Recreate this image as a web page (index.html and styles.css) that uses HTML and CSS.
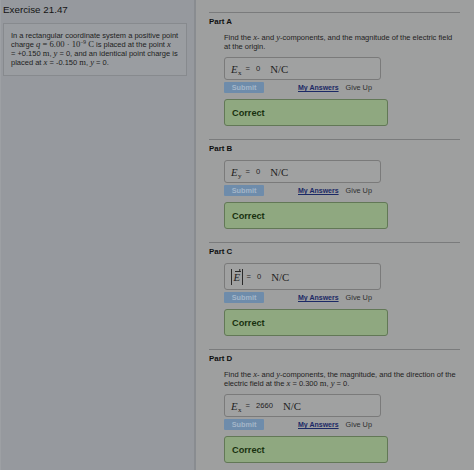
FILE: index.html
```html
<!DOCTYPE html>
<html>
<head>
<meta charset="utf-8">
<title>Exercise 21.47</title>
<link rel="stylesheet" href="styles.css">
</head>
<body>
<div class="page">
  <aside class="left">
    <h1 class="title">Exercise 21.47</h1>
    <div class="info">
      In a rectangular coordinate system a positive point<br>
      charge <span class="m"><i>q</i> = 6.00 · 10<sup>−9</sup> C</span> is placed at the point <span class="m"><i>x</i></span><br>
      = +0.150 <span class="m">m</span>, <span class="m"><i>y</i></span> = 0, and an identical point charge is<br>
      placed at <span class="m"><i>x</i></span> = -0.150 <span class="m">m</span>, <span class="m"><i>y</i></span> = 0.
    </div>
  </aside>
  <main class="right">
    <section class="part">
      <h2 class="label">Part A</h2>
      <div class="body">
        <p class="q">Find the <span class="m"><i>x</i></span>- and <span class="m"><i>y</i></span>-components, and the magnitude of the electric field<br>at the origin.</p>
        <div class="input"><span class="var"><i>E</i><sub>x</sub></span><span class="eq">=</span><span class="val">0</span><span class="unit">N/C</span></div>
        <div class="actions"><span class="submit">Submit</span><a class="mine">My Answers</a><span class="give">Give Up</span></div>
        <div class="correct">Correct</div>
      </div>
    </section>
    <section class="part">
      <h2 class="label">Part B</h2>
      <div class="body">
        <div class="input"><span class="var"><i>E</i><sub>y</sub></span><span class="eq">=</span><span class="val">0</span><span class="unit">N/C</span></div>
        <div class="actions"><span class="submit">Submit</span><a class="mine">My Answers</a><span class="give">Give Up</span></div>
        <div class="correct">Correct</div>
      </div>
    </section>
    <section class="part">
      <h2 class="label">Part C</h2>
      <div class="body">
        <div class="input tall"><span class="var abs"><span class="vec"><i>E</i></span></span><span class="eq">=</span><span class="val">0</span><span class="unit">N/C</span></div>
        <div class="actions"><span class="submit">Submit</span><a class="mine">My Answers</a><span class="give">Give Up</span></div>
        <div class="correct">Correct</div>
      </div>
    </section>
    <section class="part">
      <h2 class="label">Part D</h2>
      <div class="body">
        <p class="q">Find the <span class="m"><i>x</i></span>- and <span class="m"><i>y</i></span>-components, the magnitude, and the direction of the<br>electric field at the <span class="m"><i>x</i></span> = 0.300 <span class="m">m</span>, <span class="m"><i>y</i></span> = 0.</p>
        <div class="input"><span class="var"><i>E</i><sub>x</sub></span><span class="eq">=</span><span class="val">2660</span><span class="unit">N/C</span></div>
        <div class="actions"><span class="submit">Submit</span><a class="mine">My Answers</a><span class="give">Give Up</span></div>
        <div class="correct">Correct</div>
      </div>
    </section>
  </main>
</div>
</body>
</html>
```
FILE: styles.css
```css
html, body {
  margin: 0;
  padding: 0;
  background: #9e9f9f;
}
body {
  font-family: "Liberation Sans", Arial, sans-serif;
  color: #1e1e1e;
}
.page {
  display: flex;
  width: 474px;
  height: 470px;
  overflow: hidden;
}
.left {
  width: 193px;
  flex: none;
  background: #96999e;
  border-left: 1px solid #9da0a4;
  border-right: 2px solid #898c90;
  padding-top: 4px;
  box-sizing: content-box;
}
.title {
  margin: 0 0 7px 2px;
  font-size: 9.8px;
  line-height: 12px;
  font-weight: normal;
  color: #141414;
}
.info {
  margin-left: 2px;
  width: 168px;
  padding: 6.5px 7px 8px 7px;
  border: 1px solid #878a8e;
  background: #9a9da1;
  font-size: 7.5px;
  line-height: 9.1px;
  color: #1e1e1e;
  white-space: nowrap;
}
.m {
  font-family: "Liberation Serif", "Times New Roman", serif;
  font-size: 8.6px;
}
.m sup {
  font-size: 5.5px;
  vertical-align: 3px;
  line-height: 0;
}
.right {
  flex: 1;
  padding: 12px 14px 0 13px;
}
.part {
  border-top: 1px solid #7a7b7c;
  padding-top: 4px;
  margin-bottom: 13px;
}
.label {
  margin: 0 0 6px 0;
  font-size: 7.9px;
  line-height: 10px;
  font-weight: bold;
  color: #0f0f0f;
}
.body {
  padding-left: 15px;
}
.q {
  margin: 0 0 6px 0;
  font-size: 7.5px;
  line-height: 9px;
  color: #1e1e1e;
  white-space: nowrap;
}
.input {
  width: 157px;
  height: 23px;
  box-sizing: border-box;
  border: 1px solid #7a7a7a;
  border-radius: 3px;
  background: #a0a1a1;
  display: flex;
  align-items: center;
  padding-left: 6px;
  margin-bottom: 2px;
  color: #1e1e1e;
}
.input.tall {
  height: 27px;
}
.var {
  font-family: "Liberation Serif", "Times New Roman", serif;
  font-size: 10.8px;
  display: flex;
  align-items: baseline;
}
.var sub {
  font-size: 7px;
  vertical-align: baseline;
  position: relative;
  top: 2px;
  margin-left: 0.5px;
}
.var.abs {
  border-left: 1px solid #2a2a2a;
  border-right: 1px solid #2a2a2a;
  padding: 0 1.5px;
  height: 16px;
  align-items: center;
}
.vec {
  position: relative;
}
.vec::before {
  content: "";
  position: absolute;
  left: 1px;
  right: -1px;
  top: 0px;
  border-top: 0.8px solid #2a2a2a;
}
.vec::after {
  content: "";
  position: absolute;
  right: -1px;
  top: -1.5px;
  border-left: 2.5px solid #2a2a2a;
  border-top: 1.6px solid transparent;
  border-bottom: 1.6px solid transparent;
}
.eq {
  font-size: 7.6px;
  margin-left: 4px;
}
.val {
  font-size: 7.6px;
  margin-left: 6px;
}
.unit {
  font-family: "Liberation Serif", "Times New Roman", serif;
  font-size: 10.8px;
  margin-left: 10px;
}
.actions {
  display: flex;
  align-items: center;
  height: 11px;
  margin-bottom: 6px;
  font-size: 7px;
}
.submit {
  width: 40px;
  height: 11px;
  background: #6e8cab;
  color: #a3b5c8;
  font-weight: bold;
  font-size: 7.3px;
  line-height: 11px;
  text-align: center;
  border-radius: 1px;
}
.mine {
  margin-left: 34px;
  font-weight: bold;
  color: #1b2966;
  text-decoration: underline;
}
.give {
  margin-left: 7px;
  color: #303030;
  font-size: 7.3px;
}
.correct {
  width: 164px;
  height: 27px;
  box-sizing: border-box;
  border: 1px solid #627856;
  border-radius: 3px;
  background: #8fa880;
  color: #19310f;
  font-weight: bold;
  font-size: 9.2px;
  display: flex;
  align-items: center;
  padding-left: 7px;
}
```
